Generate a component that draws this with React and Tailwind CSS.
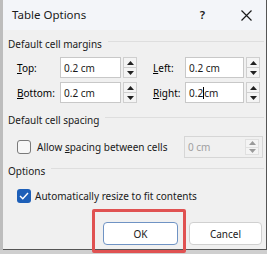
import React from "react";

function Spinner({ disabled = false }) {
  const arrow = disabled ? "#9a9a9a" : "#202020";
  const border = disabled ? "border-[#e0e0e0]" : "border-[#cfcfcf]";
  return (
    <div className="flex flex-col w-[14px] h-full">
      <div className={`flex-1 flex items-center justify-center border ${border} bg-[#f4f4f4]`}>
        <svg width="7" height="4" viewBox="0 0 7 4">
          <polygon points="3.5,0 7,4 0,4" fill={arrow} />
        </svg>
      </div>
      <div className={`flex-1 flex items-center justify-center border border-t-0 ${border} bg-[#f4f4f4]`}>
        <svg width="7" height="4" viewBox="0 0 7 4">
          <polygon points="0,0 7,0 3.5,4" fill={arrow} />
        </svg>
      </div>
    </div>
  );
}

function NumberField({ value, cursor = false, wide = true }) {
  return (
    <div className="flex items-stretch h-[21px] gap-[2px]">
      <div
        className={`${wide ? "w-[61px]" : "w-[59px]"} h-full bg-white border border-[#c8c8c8] flex items-center pl-[3px] text-[#1a1a1a]`}
      >
        {cursor ? (
          <>
            <span>0.2</span>
            <span className="inline-block w-px h-[12px] bg-black"></span>
            <span>cm</span>
          </>
        ) : (
          value
        )}
      </div>
      <Spinner />
    </div>
  );
}

function GroupHeader({ children }) {
  return (
    <div className="flex items-center h-[14px] pl-[5px] pr-[2px]">
      <span className="text-[#1a1a1a]">{children}</span>
      <div className="flex-1 h-px bg-[#dedede] ml-[6px] -mt-[5px]"></div>
    </div>
  );
}

export default function App() {
  return (
    <div
      className="relative w-[269px] h-[254px] bg-[#cfcfcf] overflow-hidden text-[10px] leading-none"
      style={{ fontFamily: '"Segoe UI", "Noto Sans", sans-serif' }}
    >
      <div className="absolute left-0 top-0 w-[3px] h-[250px] bg-[#bdbdbd]"></div>
      <div className="absolute right-0 top-0 w-[2px] h-[254px] bg-white"></div>
      <div className="ml-[2px] w-[265px] h-[250px] bg-[#f0f0f0] border-r border-b border-l border-[#555] flex flex-col">
        <div className="h-[30px] bg-[#f3f5f9] flex items-center pl-[9px] pr-[14px] text-[11.5px] text-[#1a1a1a]">
          <span className="flex-1">Table Options</span>
          <span className="mr-[36px] font-semibold">?</span>
          <svg width="11" height="11" viewBox="0 0 11 11">
            <path d="M0.5 0.5 L10.5 10.5 M10.5 0.5 L0.5 10.5" stroke="#1a1a1a" strokeWidth="1.2" />
          </svg>
        </div>

        <div className="mt-[7px]">
          <GroupHeader>Default cell margins</GroupHeader>
        </div>

        <div className="grid grid-cols-[43px_94px_31px_1fr] items-center gap-y-[4px] mt-[6px] pl-[14px]">
          <span><u>T</u>op:</span>
          <NumberField value="0.2 cm" />
          <span className="-ml-[1px]"><u>L</u>eft:</span>
          <NumberField value="0.2 cm" wide={false} />
          <span><u>B</u>ottom:</span>
          <NumberField value="0.2 cm" />
          <span className="-ml-[1px]"><u>R</u>ight:</span>
          <NumberField cursor wide={false} />
        </div>

        <div className="mt-[10px]">
          <GroupHeader>Default cell spacing</GroupHeader>
        </div>

        <div className="flex items-center mt-[9px] pl-[14px] pr-[3px] h-[22px]">
          <div className="w-[14px] h-[14px] rounded-[3px] border border-[#7a7a7a] bg-[#f7f7f7]"></div>
          <span className="ml-[6px] flex-1 text-[#1a1a1a] whitespace-nowrap">
            Allow <u>s</u>pacing between cells
          </span>
          <div className="w-[79px] h-[22px] border border-[#d6d6d6] bg-[#f0f0f0] flex items-center pl-[3px] pr-[3px] py-[2px] text-[#a0a0a0]">
            <span className="flex-1">0 cm</span>
            <Spinner disabled />
          </div>
        </div>

        <div className="mt-[6px]">
          <GroupHeader>Options</GroupHeader>
        </div>

        <div className="flex items-center mt-[11px] pl-[14px] h-[14px]">
          <div className="w-[14px] h-[14px] rounded-[3px] bg-[#1d5fb8] flex items-center justify-center">
            <svg width="10" height="8" viewBox="0 0 10 8">
              <path d="M1 4 L3.8 6.8 L9 1" fill="none" stroke="white" strokeWidth="1.4" />
            </svg>
          </div>
          <span className="ml-[4px] text-[#1a1a1a]">Automatically resize to fit contents</span>
        </div>

        <div className="flex justify-end gap-[11px] mt-[19px] pr-[4px]">
          <button className="w-[75px] h-[23px] bg-white border border-[#6f93c4] rounded-[4px] text-[#1a1a1a]">
            OK
          </button>
          <button className="w-[73px] h-[23px] bg-white border border-[#d0d0d0] rounded-[4px] text-[#1a1a1a]">
            Cancel
          </button>
        </div>
      </div>
      <div className="absolute left-[92px] top-[209px] w-[94px] h-[44px] border-[3px] border-[#e05252] rounded-[2px]"></div>
    </div>
  );
}
